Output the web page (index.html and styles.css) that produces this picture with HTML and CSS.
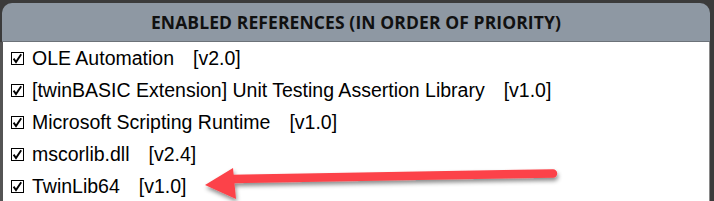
FILE: index.html
```
<!DOCTYPE html>
<html lang="en">

<head>
    <meta charset="UTF-8">
    <meta name="viewport" content="width=device-width, initial-scale=1.0">
    <title>References</title>
    <link rel="stylesheet" href="styles.css">
</head>

<body>
    <div class="panel">
        <div class="panel-head">ENABLED REFERENCES (IN ORDER OF PRIORITY)</div>
        <div class="panel-body">
            <div class="ref">
                <svg class="check" width="13" height="13" viewBox="0 0 13 13"><rect x="0.5" y="0.5" width="12" height="12" fill="#fff" stroke="#000"/><path d="M2.6 6.6 L5 10 L10.2 2.2" fill="none" stroke="#000" stroke-width="1.9"/></svg>
                <span class="name">OLE Automation</span><span class="ver">[v2.0]</span>
            </div>
            <div class="ref">
                <svg class="check" width="13" height="13" viewBox="0 0 13 13"><rect x="0.5" y="0.5" width="12" height="12" fill="#fff" stroke="#000"/><path d="M2.6 6.6 L5 10 L10.2 2.2" fill="none" stroke="#000" stroke-width="1.9"/></svg>
                <span class="name">[twinBASIC Extension] Unit Testing Assertion Library</span><span class="ver">[v1.0]</span>
            </div>
            <div class="ref">
                <svg class="check" width="13" height="13" viewBox="0 0 13 13"><rect x="0.5" y="0.5" width="12" height="12" fill="#fff" stroke="#000"/><path d="M2.6 6.6 L5 10 L10.2 2.2" fill="none" stroke="#000" stroke-width="1.9"/></svg>
                <span class="name">Microsoft Scripting Runtime</span><span class="ver">[v1.0]</span>
            </div>
            <div class="ref">
                <svg class="check" width="13" height="13" viewBox="0 0 13 13"><rect x="0.5" y="0.5" width="12" height="12" fill="#fff" stroke="#000"/><path d="M2.6 6.6 L5 10 L10.2 2.2" fill="none" stroke="#000" stroke-width="1.9"/></svg>
                <span class="name">mscorlib.dll</span><span class="ver">[v2.4]</span>
            </div>
            <div class="ref">
                <svg class="check" width="13" height="13" viewBox="0 0 13 13"><rect x="0.5" y="0.5" width="12" height="12" fill="#fff" stroke="#000"/><path d="M2.6 6.6 L5 10 L10.2 2.2" fill="none" stroke="#000" stroke-width="1.9"/></svg>
                <span class="name">TwinLib64</span><span class="ver">[v1.0]</span>
            </div>
        </div>
    </div>

    <!-- callout arrow pointing at the new reference -->
    <svg class="arrow" width="380" height="40" viewBox="0 0 380 40">
        <defs>
            <filter id="shade" x="-5%" y="-30%" width="110%" height="180%">
                <feDropShadow dx="1" dy="3" stdDeviation="2" flood-color="#000" flood-opacity="0.45"/>
            </filter>
        </defs>
        <g filter="url(#shade)">
            <path d="M31 15 L353 9.5" stroke="#fc4248" stroke-width="8.5" stroke-linecap="round" fill="none"/>
            <path d="M5 21 L33 4 L36 35 Z" fill="#fc4248"/>
        </g>
    </svg>
</body>

</html>
```

FILE: styles.css
```
body {
    margin: 0;
    background: #3b3b3b;
    width: 714px;
    height: 201px;
    overflow: hidden;
    position: relative;
}

.panel {
    padding-top: 3px;
}

.panel-head {
    margin: 0 4px 0 2px;
    height: 38px;
    background: #8e98a3;
    border-radius: 10px 10px 0 0;
    border-bottom: 1px solid #6c7279;
    display: flex;
    align-items: center;
    justify-content: center;
    font-family: "Open Sans", sans-serif;
    font-weight: 700;
    font-size: 17.5px;
    letter-spacing: 0.1px;
    color: #111;
}

.panel-body {
    margin-right: 4px;
    border-left: 3px solid #545454;
    border-right: 1px solid #8a8a8a;
    background: #fff;
    height: 159px;
    overflow: hidden;
    padding-left: 8px;
}

.ref {
    height: 32px;
    display: flex;
    align-items: center;
    font-family: "Liberation Sans", Arial, sans-serif;
    font-size: 19.5px;
    color: #000;
}

.check {
    flex: none;
    margin-right: 8px;
}

.ver {
    margin-left: 19px;
}

.arrow {
    position: absolute;
    left: 200px;
    top: 164px;
}
```
